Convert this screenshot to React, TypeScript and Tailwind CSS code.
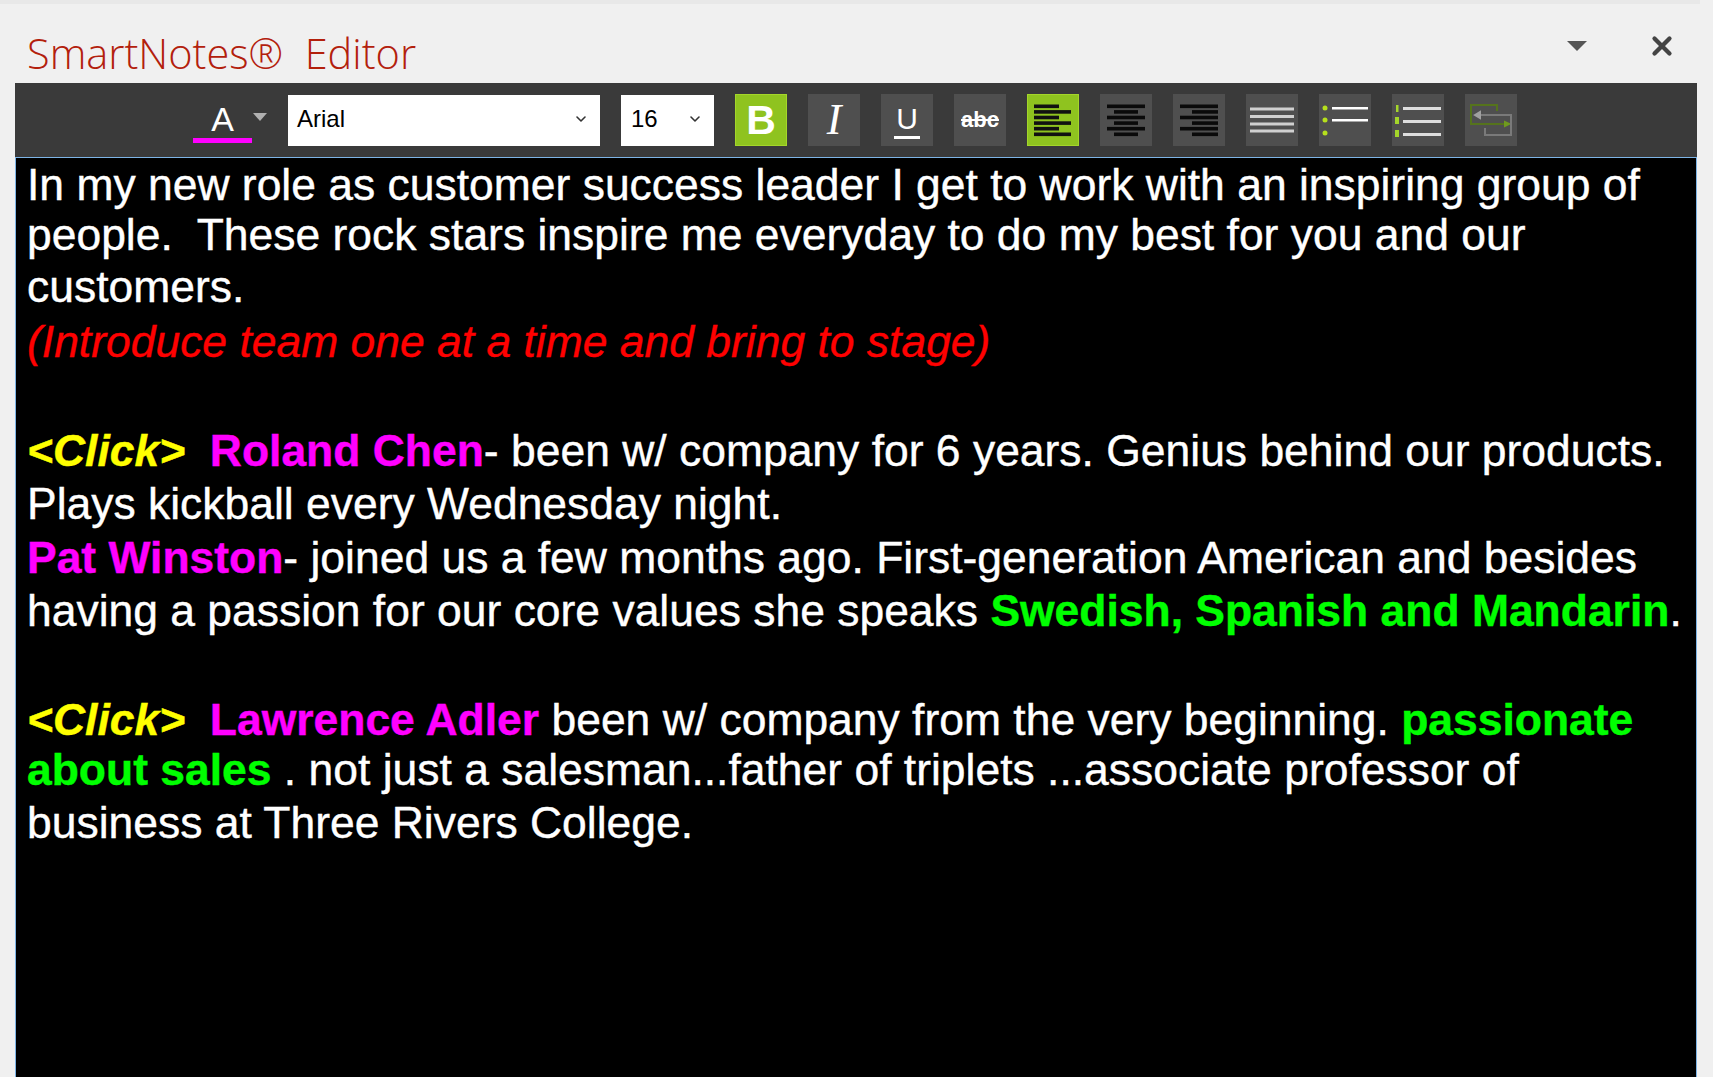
import { ChevronDown, X } from "lucide-react";

const Magenta = ({ children }: { children: string }) => (
  <b className="text-[#ff00ff]">{children}</b>
);
const Green = ({ children }: { children: string }) => (
  <b className="text-[#00ff00]">{children}</b>
);
const Click = () => <b className="italic text-[#ffff00]">&lt;Click&gt;</b>;

const ToolButton = ({ active, children }: { active?: boolean; children: React.ReactNode }) => (
  <div
    className={`flex h-[52px] w-[52px] items-center justify-center ${
      active ? "border border-[#a4d62a] bg-[#8fc31f]" : "bg-[#4f4f4f]"
    }`}
  >
    {children}
  </div>
);

// rows of a paragraph-alignment glyph: [left, right] in a 38 wide box
const LinesIcon = ({ rows, color }: { rows: number[][]; color: string }) => (
  <svg width="38" height="34" viewBox="0 0 38 34">
    {rows.map(([a, b], i) => (
      <rect key={i} x={a} y={1.5 + i * 5.6} width={b - a} height="3.6" fill={color} />
    ))}
  </svg>
);

const FieldArrow = () => <ChevronDown size={16} strokeWidth={2.4} className="text-[#333333]" />;

export default function App() {
  return (
    <div className="h-[1077px] w-[1713px] overflow-hidden bg-[#f0f0f0] font-['Liberation_Sans',sans-serif]">
      <div className="h-[4px] w-[1700px] bg-[#e8e8e8]" />
      <div className="flex h-[79px] items-center pl-[27px] pr-[36px] pt-[12px]">
        <span className="flex-1 pt-[7px] font-['Open_Sans',sans-serif] text-[41.5px] font-light text-[#b3200c]">
          SmartNotes®&nbsp; Editor
        </span>
        <svg width="22" height="12" viewBox="0 0 22 12" className="mb-[8px] mr-[59px]">
          <path d="M1 1h20L11 11z" fill="#555555" />
        </svg>
        <X size={30} strokeWidth={3.4} className="mb-[8px] text-[#444444]" />
      </div>

      <div className="mx-[15px] flex h-[74px] w-[1682px] items-center bg-[#3a3a3a] pl-[178px]">
        <div className="mr-[21px] flex items-center">
          <div className="flex w-[59px] flex-col items-center pt-[4px]">
            <span className="text-[34px] leading-[36px] text-white">A</span>
            <div className="mt-[1px] h-[5px] w-[59px] bg-[#ff00ff]" />
          </div>
          <svg width="14" height="8" viewBox="0 0 14 8" className="ml-[1px] mb-[6px]">
            <path d="M0 0h14L7 8z" fill="#b0b0b0" />
          </svg>
        </div>
        <div className="mr-[21px] flex h-[51px] w-[312px] items-center justify-between bg-white pb-[2px] pl-[9px] pr-[11px] text-[24px] text-black">
          Arial
          <FieldArrow />
        </div>
        <div className="mr-[21px] flex h-[51px] w-[93px] items-center justify-between bg-white pb-[2px] pl-[10px] pr-[11px] text-[24px] text-black">
          16
          <FieldArrow />
        </div>
        <div className="flex gap-[21px]">
          <ToolButton active>
            <span className="text-[41px] font-bold leading-none text-white">B</span>
          </ToolButton>
          <ToolButton>
            <span className="font-['Liberation_Serif',serif] text-[44px] italic leading-none text-white">I</span>
          </ToolButton>
          <ToolButton>
            <span className="border-b-[3px] border-white px-[2px] text-[30px] leading-[34px] text-white">U</span>
          </ToolButton>
          <ToolButton>
            <span className="text-[22px] font-bold leading-none text-white line-through">abc</span>
          </ToolButton>
          <ToolButton active>
            <LinesIcon
              color="#111111"
              rows={[[0, 25], [0, 37], [0, 25], [0, 37], [0, 25], [0, 37]]}
            />
          </ToolButton>
          <ToolButton>
            <LinesIcon
              color="#0a0a0a"
              rows={[[0, 38], [7, 31], [0, 38], [7, 31], [0, 38], [7, 31]]}
            />
          </ToolButton>
          <ToolButton>
            <LinesIcon
              color="#0a0a0a"
              rows={[[0, 38], [12, 38], [0, 38], [12, 38], [0, 38], [12, 38]]}
            />
          </ToolButton>
          <ToolButton>
            <svg width="44" height="28" viewBox="0 0 44 28">
              {[3, 10.5, 18, 25].map((y) => (
                <rect key={y} x="0" y={y - 1.5} width="44" height="3" fill="#d0d0d0" />
              ))}
            </svg>
          </ToolButton>
          <ToolButton>
            <svg width="46" height="36" viewBox="0 0 46 36">
              <circle cx="3" cy="6" r="2.5" fill="#b6e01c" />
              <circle cx="3" cy="18" r="2.5" fill="#b6e01c" />
              <circle cx="3" cy="31" r="2.5" fill="#b6e01c" />
              <rect x="10" y="5" width="36" height="2.5" fill="#ffffff" />
              <rect x="10" y="17" width="36" height="2.5" fill="#ffffff" />
            </svg>
          </ToolButton>
          <ToolButton>
            <svg width="46" height="36" viewBox="0 0 46 36">
              <rect x="1" y="3" width="2.5" height="7" fill="#a4d62a" />
              <rect x="0" y="15" width="4" height="7" fill="#a4d62a" />
              <rect x="0" y="28" width="4" height="7" fill="#a4d62a" />
              <rect x="8" y="5" width="38" height="3" fill="#dddddd" />
              <rect x="8" y="18" width="38" height="3" fill="#dddddd" />
              <rect x="8" y="31" width="38" height="3" fill="#dddddd" />
            </svg>
          </ToolButton>
          <ToolButton>
            <svg width="44" height="36" viewBox="0 0 44 36" fill="none" strokeWidth="2">
              <path d="M28 9V3H2v19h36" stroke="#55731c" />
              <path d="M40 22l-4-2v4z" fill="#6f9a1e" stroke="#6f9a1e" />
              <path d="M8 13h34v20H16v-7" stroke="#7a7a7a" />
              <path d="M6 13l5-3v6z" fill="#a0a0a0" stroke="#a0a0a0" />
            </svg>
          </ToolButton>
        </div>
      </div>

      <div className="mx-[15px] h-[921px] w-[1682px] border-x border-t border-[#7db4e6] bg-black pl-[11px] pt-[1px] text-[44.45px] leading-[52px] whitespace-pre text-white [-webkit-text-stroke:0.4px]">
        <div>In my new role as customer success leader I get to work with an inspiring group of</div>
        <div className="-mt-[2px]">people.  These rock stars inspire me everyday to do my best for you and our</div>
        <div>customers.</div>
        <div className="mt-[3px] italic text-[#ff0000]">(Introduce team one at a time and bring to stage)</div>
        <div className="mt-[57px]">
          <Click />  <Magenta>Roland Chen</Magenta>- been w/ company for 6 years. Genius behind our products.
        </div>
        <div className="mt-[1px]">Plays kickball every Wednesday night.</div>
        <div className="mt-[2px]">
          <Magenta>Pat Winston</Magenta>- joined us a few months ago. First-generation American and besides
        </div>
        <div className="mt-[1px]">
          having a passion for our core values she speaks <Green>Swedish, Spanish and Mandarin</Green>.
        </div>
        <div className="mt-[57px]">
          <Click />  <Magenta>Lawrence Adler</Magenta> been w/ company from the very beginning. <Green>passionate</Green>
        </div>
        <div className="-mt-[2px]">
          <Green>about sales</Green> . not just a salesman...father of triplets ...associate professor of
        </div>
        <div className="mt-[1px]">business at Three Rivers College.</div>
      </div>
    </div>
  );
}
